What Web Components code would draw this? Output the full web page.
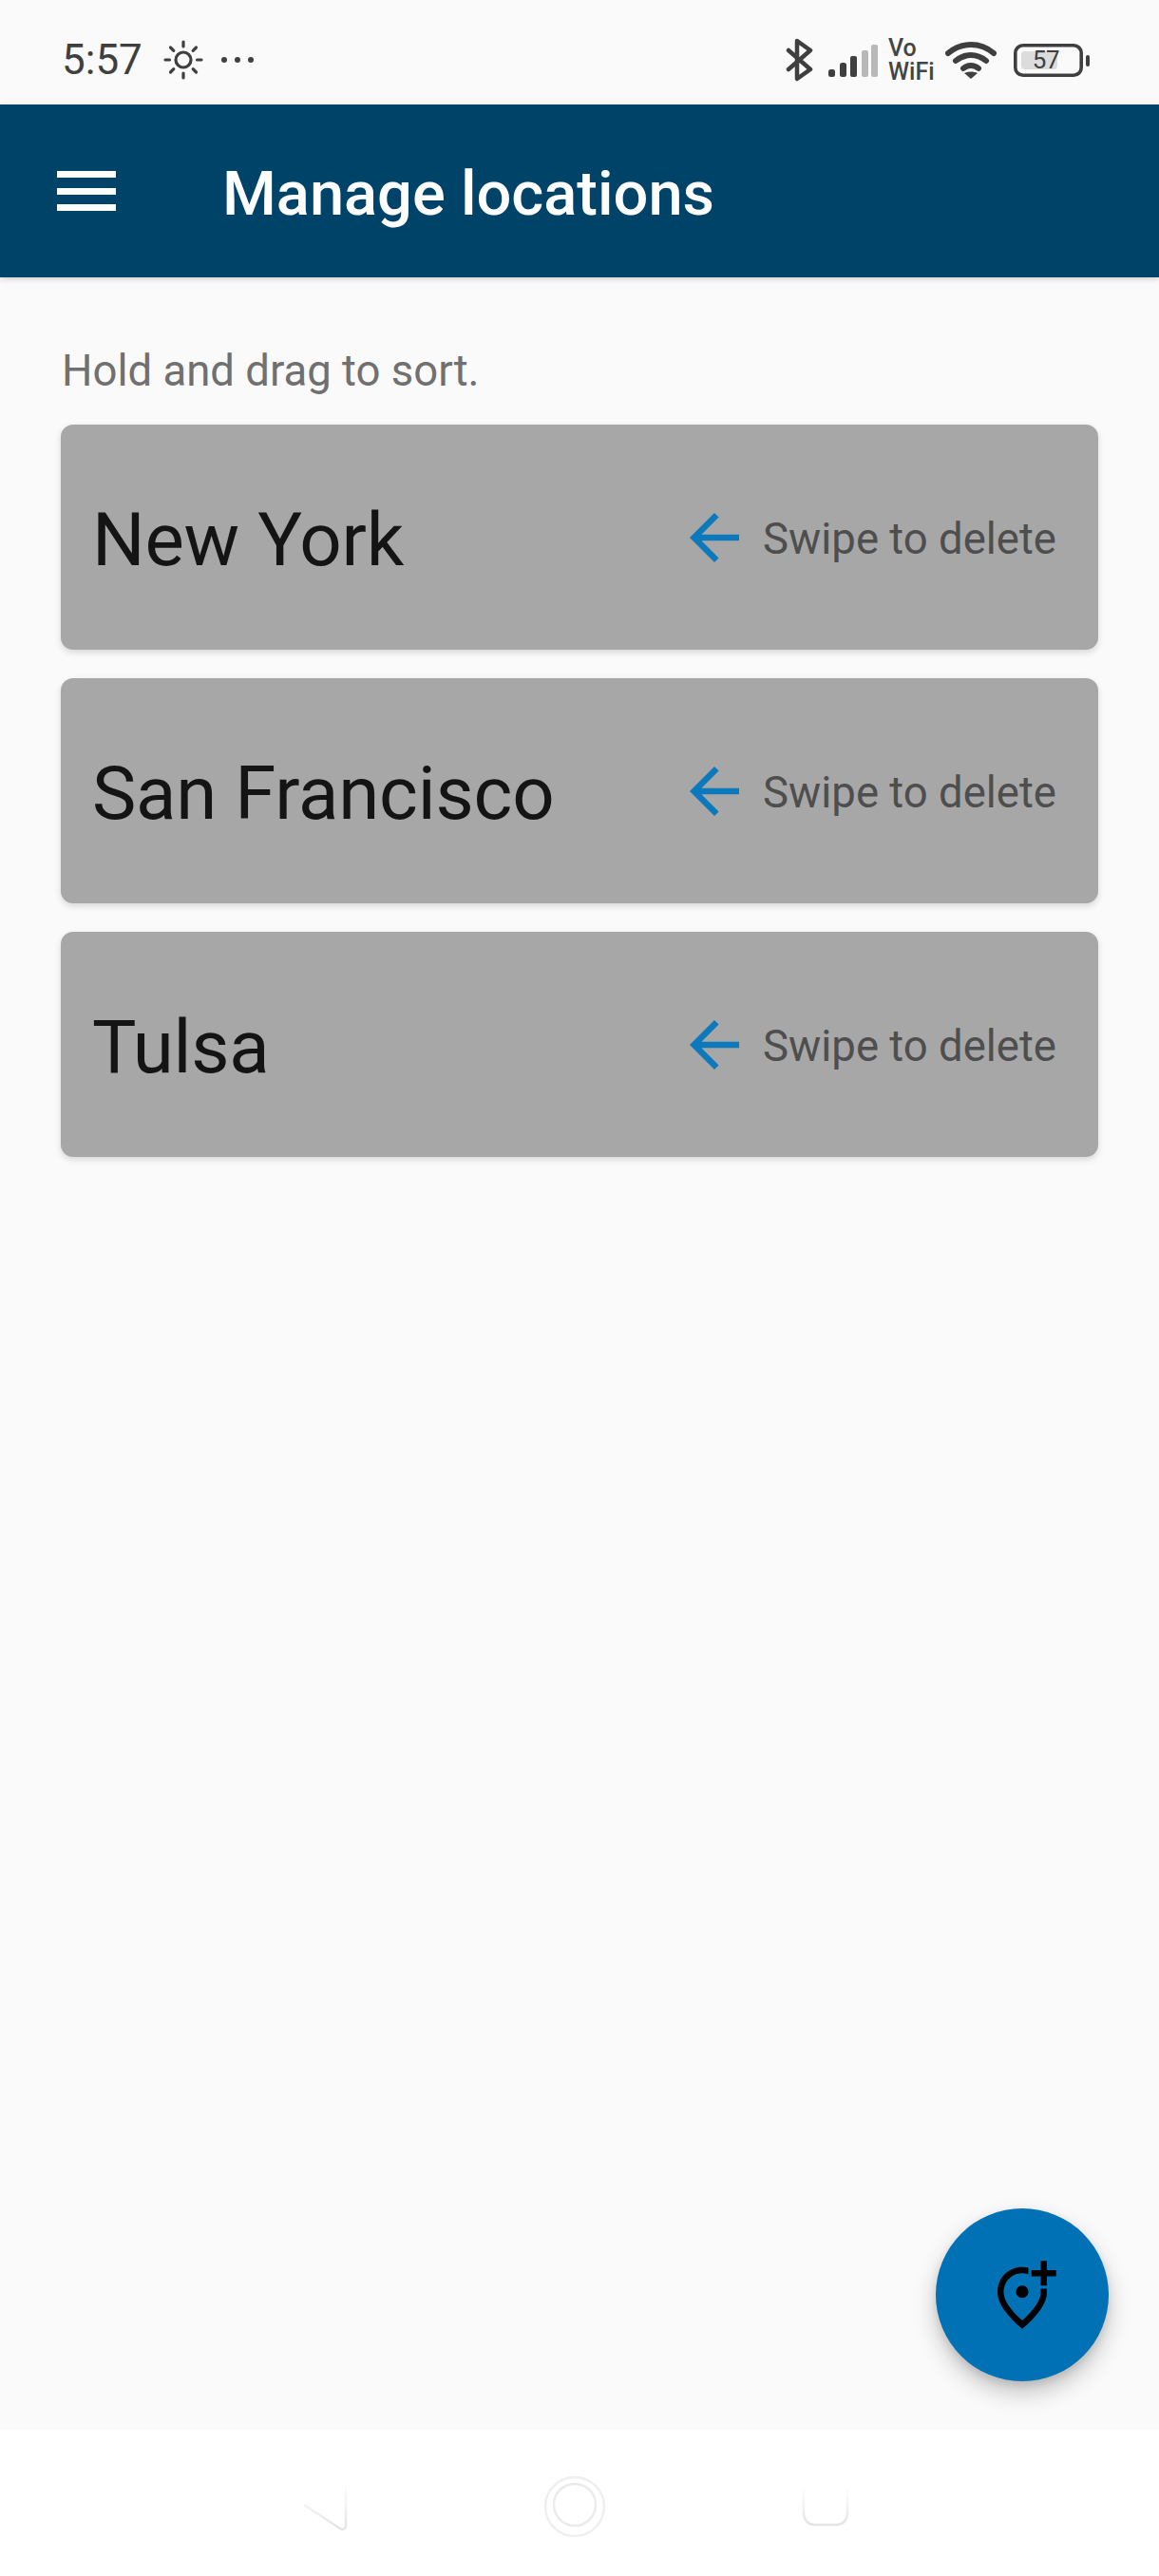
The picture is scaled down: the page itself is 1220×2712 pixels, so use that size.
<!DOCTYPE html>
<html><head><meta charset="utf-8"><title>Manage locations</title>
<style>
html,body{margin:0;padding:0;background:#fafafa}
body{font-family:Roboto,"Liberation Sans",sans-serif;width:1220px;height:2712px;overflow:hidden}
</style></head><body>
<app-shell>
  <status-bar slot="status"></status-bar>
  <app-bar slot="bar" title="Manage locations"></app-bar>
  <p-hint>Hold and drag to sort.</p-hint>
  <location-list>
    <location-card name="New York"></location-card>
    <location-card name="San Francisco"></location-card>
    <location-card name="Tulsa"></location-card>
  </location-list>
  <add-fab slot="fab"></add-fab>
  <nav-keys slot="nav"></nav-keys>
</app-shell>
<script>
function def(name,html){
  customElements.define(name,class extends HTMLElement{
    connectedCallback(){
      if(this.shadowRoot)return;
      const r=this.attachShadow({mode:'open'});
      r.innerHTML=typeof html==='function'?html(this):html;
    }
  });
}
def('app-shell',`<style>
:host{display:flex;flex-direction:column;height:2712px;position:relative;background:#fafafa}
main{flex:1;display:flex;flex-direction:column;padding:0 64px}
.fab{position:absolute;left:985px;top:2325px}
</style>
<slot name="status"></slot><slot name="bar"></slot>
<main><slot></slot></main>
<div class="fab"><slot name="fab"></slot></div>
<slot name="nav"></slot>`);

def('status-bar',`<style>
:host{display:flex;height:110px;box-sizing:border-box;align-items:center;justify-content:space-between;color:#3f3f3f;background:#fafafa;padding:16px 73px 0 65px;font-family:Roboto,sans-serif;flex:none}
.l,.r{display:flex;align-items:center}
.t{font-size:44px;font-weight:400;line-height:50px;width:85px}
svg{display:block;flex:none}
.vo{font-size:25px;font-weight:500;line-height:25px;width:48px;margin:0 12px 0 9px;color:#444;white-space:normal}
.bat{width:80px;height:35px;position:relative;margin-left:18px;display:flex;align-items:center;justify-content:center;font-size:26px;color:#3f3f3f;letter-spacing:-.4px}
.bat svg{position:absolute;left:0;top:0}
.bat span{position:relative;left:-6px}
</style>
<div class="l"><span class="t">5:57</span>
<svg style="margin-left:22px" width="42" height="42" viewBox="0 0 42 42" fill="none" stroke="#3f3f3f" stroke-width="3.2" stroke-linecap="round"><circle cx="21" cy="21" r="8"/><path d="M21 2v5M21 35v5M2 21h4.500M35.500 21h4.500M7.500 8l3.300 3.300M34.500 8l-3.300 3.300M7.500 34l3.300-3.300M34.500 34l-3.300-3.300"/></svg>
<svg style="margin-left:18px" width="36" height="10" viewBox="0 0 36 10" fill="#3f3f3f"><circle cx="4" cy="5" r="3"/><circle cx="18" cy="5" r="3"/><circle cx="32" cy="5" r="3"/></svg>
</div>
<div class="r">
<svg width="30" height="46" viewBox="0 0 30 46" fill="none" stroke="#3f3f3f" stroke-width="4.500" stroke-linejoin="round" stroke-linecap="round"><path d="M3 13l23 20-14 10V3l14 10L3 33"/></svg>
<svg style="margin-left:15px;position:relative;top:1px" width="54" height="34" viewBox="0 0 54 34"><g fill="#3f3f3f"><rect x="0" y="26" width="7" height="8" rx="2.500"/><rect x="12" y="19" width="7" height="15" rx="2.500"/><rect x="23" y="12" width="7" height="22" rx="2"/></g><g fill="#b8b8b8"><rect x="35" y="6" width="7" height="28" rx="2"/><rect x="45" y="0" width="7" height="34" rx="2"/></g></svg>
<div class="vo">Vo WiFi</div>
<svg width="54" height="40" viewBox="0 0 54 40" fill="none" stroke="#3f3f3f" stroke-width="6" stroke-linecap="round"><path d="M3 13c14-12 34-12 48 0M11 21c10-8 22-8 32 0M19 29c5-4 11-4 16 0"/><path d="M27 40l-7-6c4-2 10-2 14 0z" fill="#3f3f3f" stroke="none"/></svg>
<div class="bat"><svg width="80" height="35" viewBox="0 0 80 35"><rect x="8" y="8" width="38" height="19" rx="4" fill="#dcdcdc"/><rect x="1.800" y="1.800" width="69.400" height="31.400" rx="8" fill="none" stroke="#3f3f3f" stroke-width="3.600"/><rect x="76" y="12" width="4" height="12" rx="2" fill="#3f3f3f"/></svg><span>57</span></div>
</div>`);

def('app-bar',h=>`<style>
:host{display:flex;align-items:center;height:182px;background:#004368;color:#fff;box-shadow:0 2px 6px rgba(0,0,0,.16);position:relative;flex:none}
.m{width:62px;display:flex;flex-direction:column;gap:10.5px;margin-left:60px}
.m i{display:block;height:7px;background:#fff}
h1{margin:0 0 0 112px;font:500 65px Roboto,sans-serif;line-height:76px;position:relative;top:3px}
</style><div class="m"><i></i><i></i><i></i></div><h1>${h.getAttribute('title')}</h1>`);

def('p-hint',`<style>
:host{display:block;font:400 45.5px Roboto,sans-serif;line-height:53px;color:#707070;margin:72px 0 30px 1px;height:53px}
</style><slot></slot>`);

def('location-list',`<style>:host{display:flex;flex-direction:column;gap:30px}</style><slot></slot>`);

def('location-card',h=>`<style>
:host{display:flex;align-items:center;height:237px;box-sizing:border-box;background:#a7a7a7;border-radius:13px;box-shadow:0 3px 7px rgba(0,0,0,.14);padding:0 44px 0 33px;color:#141414}
.n{flex:1;font:400 78px Roboto,sans-serif;line-height:90px;letter-spacing:-.2px;position:relative;top:3px}
svg{display:block;flex:none}
.s{font:400 45.5px Roboto,sans-serif;color:#4e4e4e;margin-left:12px;position:relative;top:2px}
</style><span class="n">${h.getAttribute('name')}</span>
<svg width="78" height="78" viewBox="0 0 24 24" fill="#0b79bc"><path d="M20 11H7.83l5.59-5.59L12 4l-8 8 8 8 1.41-1.41L7.83 13H20v-2z"/></svg><span class="s">Swipe to delete</span>`);

def('add-fab',`<style>
:host{display:flex;width:182px;height:182px;border-radius:50%;background:#0071b5;align-items:center;justify-content:center;box-shadow:0 12px 24px rgba(0,0,0,.22),0 4px 8px rgba(0,0,0,.1)}
</style><svg width="78" height="78" viewBox="0 0 24 24" fill="#000"><path d="M20,1v3h3v2h-3v3h-2V6h-3V4h3V1H20z M12,13c1.1,0,2-0.9,2-2c0-1.1-0.9-2-2-2s-2,0.9-2,2C10,12.1,10.9,13,12,13z M14,3.25v2.08 C13.38,5.12,12.71,5,12,5c-3.35,0-6,2.57-6,6.2c0,2.34,1.95,5.44,6,9.14c4.05-3.7,6-6.79,6-9.14c0-0.41-0.03-0.81-0.1-1.2h2.02 c0.05,0.39,0.08,0.79,0.08,1.2c0,3.32-2.67,7.25-8,11.8c-5.33-4.55-8-8.48-8-11.8C4,6.22,7.8,3,12,3C12.68,3,13.35,3.08,14,3.25z"/></svg>`);

def('nav-keys',`<style>
:host{display:block;height:154px;background:#fff;flex:none}
svg{display:block;filter:blur(.6px)}
</style><svg width="1220" height="154" viewBox="0 0 1220 154" fill="none">
<defs><linearGradient id="f" x1="0" y1="0" x2="0" y2="1"><stop offset="0" stop-color="#fff"/><stop offset=".55" stop-color="#f1f1f1"/><stop offset="1" stop-color="#e4e4e4"/></linearGradient></defs>
<path d="M320 79l38 25c3 2 6 0 6-3V54" stroke="url(#f)" stroke-width="2.500"/>
<circle cx="605" cy="81" r="31" stroke="#efefef" stroke-width="2.500"/>
<circle cx="605" cy="79" r="22" stroke="#ebebeb" stroke-width="2.500"/>
<path d="M846 59v29c0 7 5 12 11 12h24c6 0 11-5 11-12V59" stroke="url(#f)" stroke-width="2.500"/>
</svg>`);
</script>
</body></html>
